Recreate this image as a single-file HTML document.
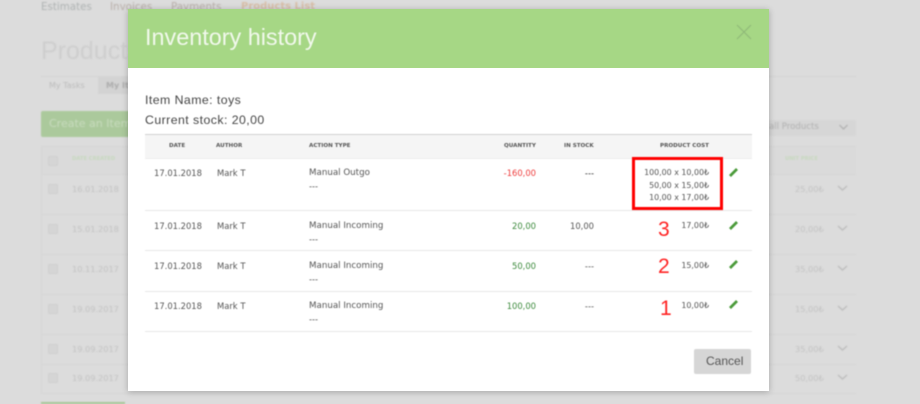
<!DOCTYPE html>
<html><head><meta charset="utf-8">
<style>
html,body{margin:0;padding:0;width:920px;height:404px;overflow:hidden;background:#dcdcdc}
body{position:relative;font-family:"DejaVu Sans","Liberation Sans",sans-serif}
.t{position:absolute;white-space:nowrap;line-height:1}
.bg{position:absolute;left:0;top:0;width:920px;height:404px;filter:blur(.7px)}
.bgt{color:#c2c2c2;font-size:8.2px}
.l{position:absolute;height:1px;background:#d6d6d6;left:41px;width:815px}
.cb{position:absolute;left:48px;width:8px;height:8px;background:#d5d5d5;border:1px solid #cfcfcf;border-radius:2px}
.modal{position:absolute;left:128px;top:9px;width:641px;height:382px;background:#fff;box-shadow:0 1px 6px rgba(0,0,0,.25)}
.head{position:absolute;left:0;top:0;width:641px;height:59px;background:#a6d785}
.c{position:absolute;left:0;top:0;width:920px;height:404px;filter:blur(.45px)}
.b{color:#555;font-size:8.4px}
.p{color:#555;font-size:7.9px}
.h{color:#555;font-size:5.6px;font-weight:bold}
.r{text-align:right}
.sep{position:absolute;left:145px;width:607px;height:1px;background:#e8e8e8}
.num{color:#f22;font-family:"Liberation Sans",sans-serif;font-size:21px}
</style></head><body>
<div class="bg">
<div class="t" style="left:41px;top:2px;font-size:10.300px;color:#aeb2b2">Estimates</div>
<div class="t" style="left:110px;top:2px;font-size:10.300px;color:#b8aea9">Invoices</div>
<div class="t" style="left:171px;top:2px;font-size:10.300px;color:#b8aea9">Payments</div>
<div class="t" style="left:241px;top:2px;font-size:10px;font-weight:bold;color:#d8bea8">Products List</div>
<div class="t" style="left:41px;top:39px;font-size:25px;color:#cecece;font-family:'Liberation Sans',sans-serif">Products</div>
<div style="position:absolute;left:41px;top:76px;width:815px;height:1px;background:#d4d4d4"></div>
<div style="position:absolute;left:98px;top:77px;width:40px;height:17px;background:#d3d3d3"></div>
<div class="t" style="left:49px;top:82px;font-size:8px;color:#bbb">My Tasks</div>
<div class="t" style="left:106px;top:82px;font-size:8px;font-weight:bold;color:#adadad">My Items</div>
<div style="position:absolute;left:41px;top:111px;width:100px;height:26px;background:#abc99c;border-radius:2px"></div>
<div class="t" style="left:49px;top:118px;font-size:11px;color:#c9dcbf">Create an Item</div>
<div style="position:absolute;left:750px;top:120px;width:106px;height:16px;background:#d6d6d6;border-radius:2px"></div>
<div class="t" style="left:769px;top:123px;font-size:8.6px;color:#b0b0b0">all Products</div>
<svg style="position:absolute;left:839px;top:124px" width="9" height="7"><path d="M.5 1L4.500 5L8.500 1" fill="none" stroke="#aaa" stroke-width="1.100"/></svg>
<div style="position:absolute;left:41px;top:146px;width:815px;height:28px;background:#dadada"></div>
<div style="position:absolute;left:41px;top:146px;width:1px;height:248px;background:#d5d5d5"></div>
<div class="l" style="top:146px"></div><div class="l" style="top:174px"></div><div class="l" style="top:214px"></div><div class="l" style="top:254px"></div><div class="l" style="top:294px"></div><div class="l" style="top:334px"></div><div class="l" style="top:364px"></div><div class="l" style="top:393px"></div>
<div class="cb" style="top:156px"></div><div class="cb" style="top:184px"></div><div class="cb" style="top:224px"></div><div class="cb" style="top:264px"></div><div class="cb" style="top:304px"></div><div class="cb" style="top:344px"></div><div class="cb" style="top:373px"></div>
<div class="t" style="left:72px;top:157px;font-size:5.200px;font-weight:bold;color:#c6d8be">DATE CREATED</div>
<div class="t" style="left:785px;top:157px;font-size:5.200px;font-weight:bold;color:#c6d8be">UNIT PRICE</div>
<div class="t bgt" style="left:72px;top:185px">16.01.2018</div>
<div class="t bgt" style="left:72px;top:225px">15.01.2018</div>
<div class="t bgt" style="left:72px;top:265px">10.11.2017</div>
<div class="t bgt" style="left:72px;top:305px">19.09.2017</div>
<div class="t bgt" style="left:72px;top:345px">19.09.2017</div>
<div class="t bgt" style="left:72px;top:374px">19.09.2017</div>
<div class="t bgt" style="left:795px;top:185px">25,00₺</div>
<div class="t bgt" style="left:795px;top:225px">20,00₺</div>
<div class="t bgt" style="left:795px;top:265px">35,00₺</div>
<div class="t bgt" style="left:795px;top:305px">15,00₺</div>
<div class="t bgt" style="left:795px;top:345px">35,00₺</div>
<div class="t bgt" style="left:795px;top:374px">50,00₺</div>
<svg style="position:absolute;left:0;top:0" width="920" height="404" fill="none" stroke="#b5b5b5" stroke-width="1.100"><path d="M838 186L842.500 190L847 186M838 226L842.500 230L847 226M838 266L842.500 270L847 266M838 306L842.500 310L847 306M838 346L842.500 350L847 346M838 375L842.500 379L847 375"/></svg>
<div style="position:absolute;left:41px;top:402px;width:84px;height:2px;background:#a6c596"></div>
</div>

<div class="modal"><div class="head"></div></div>
<div class="c">
<div class="t" style="left:145px;top:26px;font-size:23.400px;color:#f1f8ec;font-family:'Liberation Sans',sans-serif">Inventory history</div>
<svg style="position:absolute;left:736px;top:24px" width="16" height="16"><path d="M1 1L15 15M15 1L1 15" stroke="#8fb878" stroke-width="1" fill="none"/></svg>
<div class="t" style="left:145px;top:94px;font-size:12.300px;color:#444;font-family:'Liberation Sans',sans-serif;letter-spacing:.45px">Item Name: toys</div>
<div class="t" style="left:145px;top:114px;font-size:12.300px;color:#444;font-family:'Liberation Sans',sans-serif;letter-spacing:.45px">Current stock: 20,00</div>

<div style="position:absolute;left:145px;top:134px;width:607px;height:24px;background:#f5f5f5;border-top:1px solid #d0d0d0;box-sizing:border-box"></div>
<div class="t h" style="left:169px;top:144px">DATE</div>
<div class="t h" style="left:216px;top:144px">AUTHOR</div>
<div class="t h" style="left:309px;top:144px">ACTION TYPE</div>
<div class="t h" style="left:504px;top:144px">QUANTITY</div>
<div class="t h" style="left:564px;top:144px">IN STOCK</div>
<div class="t h" style="left:660px;top:144px">PRODUCT COST</div>

<div class="sep" style="top:158px;background:#eee"></div>
<div class="sep" style="top:210px"></div><div class="sep" style="top:250px"></div><div class="sep" style="top:291px"></div><div class="sep" style="top:331px"></div>

<div class="t b" style="left:154px;top:169px">17.01.2018</div>
<div class="t b" style="left:217px;top:169px">Mark T</div>
<div class="t b" style="left:309px;top:169px;font-size:8.700px">Manual Outgo</div>
<div class="t b" style="left:309px;top:182px">---</div>
<div class="t b r" style="right:384px;top:169px;color:#ee3c3c">-160,00</div>
<div class="t b r" style="right:326px;top:169px;color:#333">---</div>
<div class="t p r" style="right:211px;top:169px">100,00 x 10,00₺</div>
<div class="t p r" style="right:211px;top:182px">50,00 x 15,00₺</div>
<div class="t p r" style="right:211px;top:194px">10,00 x 17,00₺</div>
<div style="position:absolute;left:632px;top:157px;width:91px;height:53px;border:3px solid #f00;box-sizing:border-box"></div>

<div class="t b" style="left:154px;top:222px">17.01.2018</div>
<div class="t b" style="left:217px;top:222px">Mark T</div>
<div class="t b" style="left:309px;top:222px;font-size:8.700px">Manual Incoming</div>
<div class="t b" style="left:309px;top:235px">---</div>
<div class="t b r" style="right:384px;top:222px;color:#3c8a3c">20,00</div>
<div class="t b r" style="right:326px;top:222px">10,00</div>
<div class="t num" style="left:658px;top:219px">3</div>
<div class="t p r" style="right:211px;top:222px">17,00₺</div>

<div class="t b" style="left:154px;top:262px">17.01.2018</div>
<div class="t b" style="left:217px;top:262px">Mark T</div>
<div class="t b" style="left:309px;top:262px;font-size:8.700px">Manual Incoming</div>
<div class="t b" style="left:309px;top:275px">---</div>
<div class="t b r" style="right:384px;top:262px;color:#3c8a3c">50,00</div>
<div class="t b r" style="right:326px;top:262px">---</div>
<div class="t num" style="left:658px;top:256px">2</div>
<div class="t p r" style="right:211px;top:262px">15,00₺</div>

<div class="t b" style="left:154px;top:302px">17.01.2018</div>
<div class="t b" style="left:217px;top:302px">Mark T</div>
<div class="t b" style="left:309px;top:302px;font-size:8.700px">Manual Incoming</div>
<div class="t b" style="left:309px;top:315px">---</div>
<div class="t b r" style="right:384px;top:302px;color:#3c8a3c">100,00</div>
<div class="t b r" style="right:326px;top:302px">---</div>
<div class="t num" style="left:660px;top:298px">1</div>
<div class="t p r" style="right:211px;top:302px">10,00₺</div>

<svg style="position:absolute;left:0;top:0" width="920" height="404" fill="none" stroke="#4a9a3a" stroke-width="2.800"><path d="M730 176L737 169M730 229L737 222M730 268L737 261M730 308L737 301"/></svg>

<div style="position:absolute;left:694px;top:349px;width:57px;height:25px;background:#d6d6d6;border-radius:2px"></div>
<div class="t" style="left:706px;top:355px;font-size:12px;color:#555;font-family:'Liberation Sans',sans-serif">Cancel</div>
</div>
</body></html>
